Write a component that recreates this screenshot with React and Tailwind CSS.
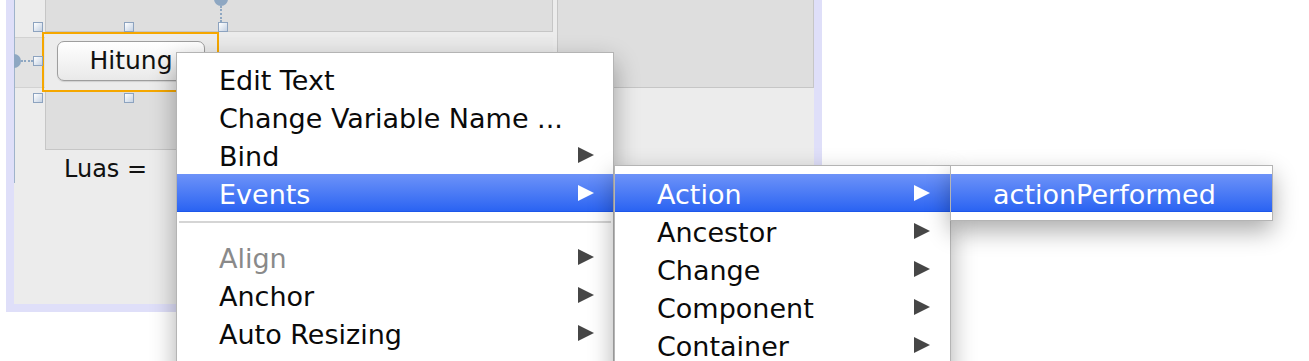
import React from 'react';

// NetBeans GUI builder: a selected button on the form, with the
// right-click context menu opened on Events > Action > actionPerformed.

const FONT = "font-['DejaVu_Sans','Liberation_Sans',sans-serif]";

const Arrow = ({ light }) => (
  <svg width="16" height="16" viewBox="0 0 16 16" className="shrink-0">
    <polygon points="0,0 16,8 0,16" fill={light ? '#ffffff' : '#464646'} />
  </svg>
);

const Handle = ({ x, y }) => (
  <div
    className="absolute w-[10px] h-[10px] border border-[#8da3bf] bg-linear-to-br from-white to-[#c5d2e3]"
    style={{ left: x - 5, top: y - 5 }}
  />
);

const MenuItem = ({ label, sub, active, disabled, padR = 'pr-[19px]' }) => (
  <div
    className={
      'flex items-center justify-between h-[38px] pl-[42px] ' + padR + ' ' +
      (active
        ? 'bg-linear-to-b from-[#6d92f8] to-[#2a63f2] border-b border-[#1d57ea] text-white'
        : disabled
        ? 'text-[#8a8a8a]'
        : 'text-[#0a0a0a]')
    }
  >
    <span className="pt-[3px] leading-[35px] whitespace-nowrap">{label}</span>
    {sub && <Arrow light={active} />}
  </div>
);

const Menu = ({ className, children }) => (
  <div
    className={
      'absolute bg-white border border-[#b4b4b4] shadow-[0_10px_24px_rgba(0,0,0,0.33)] text-[27px] ' +
      FONT + ' ' + className
    }
  >
    {children}
  </div>
);

export default function App() {
  return (
    <div className={'relative w-[1309px] h-[361px] overflow-hidden bg-white ' + FONT}>
      {/* designer frame */}
      <div className="pl-[6px]">
        <div className="w-[816px] h-[312px] bg-[#dfdff9] px-[8px] pb-[8px]">
          <div className="relative w-[800px] h-[304px] overflow-hidden bg-[#ececec]">
            <div className="grid grid-cols-[31px_173px_335px_4px_257px] grid-rows-[32px_5px_51px_4px_58px_1fr] h-full">
              <div className="col-start-2 col-span-2 row-start-1 bg-[#dedede] border-l border-r border-b border-[#c6c6c6]" />
              <div className="col-start-5 row-start-1 row-span-3 bg-[#dedede] border-l border-r border-b border-[#c6c6c6]" />
              <div className="col-start-1 row-start-3 bg-[#e2e2e2] border-y border-[#d2d2d2]" />
              <div className="col-start-2 row-start-3 pl-[12px] pt-[4px]">
                <div className="w-[148px] h-[40px] rounded-[7px] border border-[#9e9e9e] bg-linear-to-b from-white to-[#e9e9e9] flex items-center justify-center text-[25px] text-[#111] shadow-[0_1px_1px_rgba(0,0,0,0.12)]">
                  Hitung
                </div>
              </div>
              <div className="col-start-3 row-start-3 bg-[#eaeaea] border-l border-[#cfcfcf]" />
              <div className="col-start-2 row-start-5 bg-[#dedede] border-l border-b border-[#c6c6c6]" />
              <div className="col-start-2 col-span-2 row-start-6 pl-[19px] pt-[7px] text-[24px] leading-none text-[#111] whitespace-nowrap">
                Luas =
              </div>
            </div>

            {/* guideline on the left edge */}
            <div className="absolute left-0 top-0 w-px h-[183px] bg-[#9fb3ca]" />

            {/* selection outline */}
            <div className="absolute left-[28px] top-[32px] w-[177px] h-[60px] border-2 border-[#f5a700]" />

            {/* anchors */}
            <div className="absolute left-[-7px] top-[54px] w-[14px] h-[14px] rounded-full bg-[#8ea7c2]" />
            <div className="absolute left-[7px] top-[60px] w-[12px] border-t-2 border-dotted border-[#8ea7c2]" />
            <div className="absolute left-[200px] top-[-8px] w-[14px] h-[14px] rounded-full bg-[#8ea7c2]" />
            <div className="absolute left-[206px] top-[6px] h-[16px] border-l-2 border-dotted border-[#8ea7c2]" />

            <Handle x={24} y={27} />
            <Handle x={115} y={27} />
            <Handle x={209} y={27} />
            <Handle x={24} y={61} />
            <Handle x={24} y={98} />
            <Handle x={115} y={98} />
          </div>
        </div>
      </div>

      {/* context menu */}
      <Menu className="left-[176px] top-[52px] w-[438px] h-[330px] pt-[7px] z-10">
        <MenuItem label="Edit Text" />
        <MenuItem label="Change Variable Name ..." />
        <MenuItem label="Bind" sub />
        <MenuItem label="Events" sub active />
        <div className="h-[26px] pt-[9px] px-[2px]">
          <div className="h-[2px] bg-[#d5d5d5]" />
        </div>
        <MenuItem label="Align" sub disabled />
        <MenuItem label="Anchor" sub />
        <MenuItem label="Auto Resizing" sub />
        <MenuItem label="Same Size" sub disabled />
      </Menu>

      {/* Events submenu */}
      <Menu className="left-[614px] top-[165px] w-[337px] h-[230px] pt-[8px] z-20">
        <MenuItem label="Action" sub active padR="pr-[20px]" />
        <MenuItem label="Ancestor" sub padR="pr-[20px]" />
        <MenuItem label="Change" sub padR="pr-[20px]" />
        <MenuItem label="Component" sub padR="pr-[20px]" />
        <MenuItem label="Container" sub padR="pr-[20px]" />
      </Menu>

      {/* Action submenu */}
      <Menu className="left-[950px] top-[165px] w-[323px] pt-[8px] pb-[8px] z-30">
        <MenuItem label="actionPerformed" active />
      </Menu>
    </div>
  );
}
